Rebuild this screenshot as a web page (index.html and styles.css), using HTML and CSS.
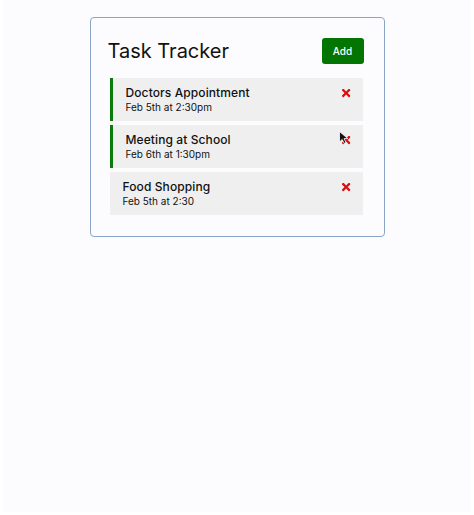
FILE: index.html
```html
<!DOCTYPE html>
<html lang="en">
<head>
<meta charset="utf-8">
<title>Task Tracker</title>
<link rel="stylesheet" href="styles.css">
</head>
<body>
  <div class="container">
    <header class="header">
      <h1 class="title">Task Tracker</h1>
      <button class="btn">Add</button>
    </header>
    <div class="tasks">
      <div class="task reminder">
        <div class="task-text">
          <h3 class="task-title">Doctors Appointment</h3>
          <p class="task-day">Feb 5th at 2:30pm</p>
        </div>
        <svg class="del" viewBox="0 0 352 512" aria-hidden="true"><path d="M242.72 256l100.07-100.07c12.28-12.28 12.28-32.19 0-44.48l-22.24-22.24c-12.28-12.28-32.19-12.28-44.48 0L176 189.28 75.930 89.210c-12.28-12.28-32.19-12.28-44.48 0L9.21 111.45c-12.28 12.28-12.28 32.190 0 44.48L109.28 256 9.21 356.07c-12.28 12.28-12.28 32.19 0 44.48l22.24 22.24c12.28 12.28 32.2 12.28 44.48 0L176 322.72l100.07 100.07c12.28 12.28 32.2 12.28 44.48 0l22.24-22.24c12.28-12.28 12.28-32.19 0-44.48L242.72 256z"/></svg>
      </div>
      <div class="task reminder">
        <div class="task-text">
          <h3 class="task-title">Meeting at School</h3>
          <p class="task-day">Feb 6th at 1:30pm</p>
        </div>
        <svg class="del" viewBox="0 0 352 512" aria-hidden="true"><path d="M242.72 256l100.07-100.07c12.28-12.28 12.28-32.19 0-44.48l-22.24-22.24c-12.28-12.28-32.19-12.28-44.48 0L176 189.28 75.930 89.210c-12.28-12.28-32.19-12.28-44.48 0L9.21 111.45c-12.28 12.28-12.28 32.190 0 44.48L109.28 256 9.21 356.07c-12.28 12.28-12.28 32.19 0 44.48l22.24 22.24c12.28 12.28 32.2 12.28 44.48 0L176 322.72l100.07 100.07c12.28 12.28 32.2 12.28 44.48 0l22.24-22.24c12.28-12.28 12.28-32.19 0-44.48L242.72 256z"/></svg>
        <svg class="cursor" viewBox="0 0 10 13" aria-hidden="true"><path d="M0.5 0.5 L0.5 11 L3.2 8.4 L5.2 12.4 L7 11.5 L5 7.6 L8.8 7.6 Z"/></svg>
      </div>
      <div class="task">
        <div class="task-text">
          <h3 class="task-title">Food Shopping</h3>
          <p class="task-day">Feb 5th at 2:30</p>
        </div>
        <svg class="del" viewBox="0 0 352 512" aria-hidden="true"><path d="M242.72 256l100.07-100.07c12.28-12.28 12.28-32.19 0-44.48l-22.24-22.24c-12.28-12.28-32.19-12.28-44.48 0L176 189.28 75.930 89.210c-12.28-12.28-32.19-12.28-44.48 0L9.21 111.45c-12.28 12.28-12.28 32.190 0 44.48L109.28 256 9.21 356.07c-12.28 12.28-12.28 32.19 0 44.48l22.24 22.24c12.28 12.28 32.2 12.28 44.48 0L176 322.72l100.07 100.07c12.28 12.28 32.2 12.28 44.48 0l22.24-22.24c12.28-12.28 12.28-32.19 0-44.48L242.72 256z"/></svg>
      </div>
    </div>
  </div>
</body>
</html>
```

FILE: styles.css
```css
html {
  background: #ffffff;
}

body {
  display: flow-root;
  margin: 0 3px 3px 3px;
  height: 512px;
  background: #fcfbfd;
  font-family: Inter, "Noto Sans", sans-serif;
  color: #111111;
}

.container {
  box-sizing: border-box;
  width: 295px;
  margin: 17px auto 0;
  padding: 0 20px 21px 17px;
  border: 1px solid #8ba5c7;
  border-radius: 4px;
}

.header {
  display: flex;
  justify-content: space-between;
  align-items: center;
  height: 26px;
  margin: 20px 0 14px;
}

.title {
  margin: 0;
  font-size: 20px;
  line-height: 26px;
  font-weight: 400;
  letter-spacing: 0;
}

.btn {
  width: 42px;
  height: 26px;
  padding: 0;
  border: none;
  border-radius: 3px;
  background: #037503;
  color: #ffffff;
  font-family: inherit;
  font-size: 10px;
  font-weight: 500;
}

.tasks {
  margin: 0 1px 0 2px;
  display: flex;
  flex-direction: column;
  gap: 4px;
}

.task {
  position: relative;
  box-sizing: border-box;
  height: 43px;
  display: flex;
  justify-content: space-between;
  align-items: flex-start;
  padding: 7px 12px 0 13px;
  background: #efeff0;
}

.task.reminder {
  border-left: 3px solid #0a7a0a;
}

.task-title {
  margin: 0;
  font-size: 12px;
  line-height: 16px;
  font-weight: 500;
  letter-spacing: 0.1px;
}

.task-day {
  margin: 0;
  font-size: 10px;
  line-height: 13px;
  font-weight: 400;
  letter-spacing: 0;
}

.del {
  width: 8.25px;
  height: 12px;
  margin-top: 2px;
  fill: #e00b0b;
}

.cursor {
  position: absolute;
  left: 226px;
  top: 6px;
  width: 10px;
  height: 13px;
  fill: #111111;
  stroke: #ffffff;
  stroke-width: 0.8;
}
```
